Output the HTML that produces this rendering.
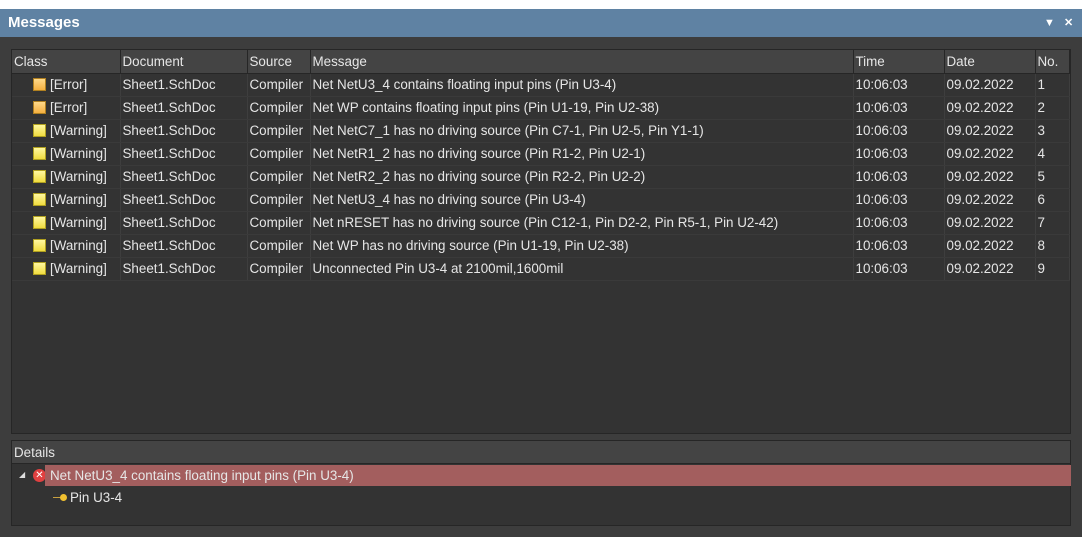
<!DOCTYPE html><html><head><style>
*{margin:0;padding:0;box-sizing:border-box}
body{width:1082px;height:537px;background:#3d3d3d;font-family:"Liberation Sans",sans-serif;font-size:13.4px;color:#e6e6e6;position:relative;overflow:hidden}
.top{position:absolute;left:0;top:0;width:1082px;height:9px;background:#fff}
.title{position:absolute;left:0;top:9px;width:1082px;height:28px;background:#5f82a3;color:#fff;font-weight:bold;font-size:15px;line-height:28px;padding-left:8px}
.title .b{position:absolute;top:0;font-size:11px}
.panel{position:absolute;left:11px;top:49px;width:1060px;height:385px;background:#333;border:1px solid #262626}
table{border-collapse:collapse;width:100%;table-layout:fixed}
td,th{height:23px;white-space:nowrap;overflow:hidden;font-weight:normal;text-align:left;padding-left:2px;border-right:1px solid #3e3e3e;border-bottom:1px solid #3a3a3a}
th{background:#444;border-right:1px solid #262626;border-bottom:1px solid #262626;height:23px}
.ic{display:inline-block;width:13px;height:13px;vertical-align:-2px;margin-right:4px;border:1px solid #b08020;background:linear-gradient(#ffd98a,#f5b040)}
.w{border-color:#b0a020;background:linear-gradient(#fff7a0,#f0dc40)}
.det{position:absolute;left:11px;top:440px;width:1060px;height:86px;background:#333;border:1px solid #262626}
.dh{height:23px;background:#444;line-height:23px;padding-left:2px;border-bottom:1px solid #262626}
.sel{position:absolute;left:33px;top:24px;width:1026px;height:21px;background:#a35e5e;line-height:21px;padding-left:5px}
</style></head><body>
<div class="top"></div>
<div class="title">Messages<span class="b" style="left:1044px">▼</span><span class="b" style="left:1064px">✕</span></div>
<div class="panel"><table>
<colgroup><col style="width:108px"><col style="width:127px"><col style="width:63px"><col style="width:543px"><col style="width:91px"><col style="width:91px"><col></colgroup>
<tr><th>Class</th><th>Document</th><th>Source</th><th>Message</th><th>Time</th><th>Date</th><th>No.</th></tr>
<tr><td style="padding-left:21px"><span class="ic"></span>[Error]</td><td>Sheet1.SchDoc</td><td>Compiler</td><td>Net NetU3_4 contains floating input pins (Pin U3-4)</td><td>10:06:03</td><td>09.02.2022</td><td>1</td></tr>
<tr><td style="padding-left:21px"><span class="ic"></span>[Error]</td><td>Sheet1.SchDoc</td><td>Compiler</td><td>Net WP contains floating input pins (Pin U1-19, Pin U2-38)</td><td>10:06:03</td><td>09.02.2022</td><td>2</td></tr>
<tr><td style="padding-left:21px"><span class="ic w"></span>[Warning]</td><td>Sheet1.SchDoc</td><td>Compiler</td><td>Net NetC7_1 has no driving source (Pin C7-1, Pin U2-5, Pin Y1-1)</td><td>10:06:03</td><td>09.02.2022</td><td>3</td></tr>
<tr><td style="padding-left:21px"><span class="ic w"></span>[Warning]</td><td>Sheet1.SchDoc</td><td>Compiler</td><td>Net NetR1_2 has no driving source (Pin R1-2, Pin U2-1)</td><td>10:06:03</td><td>09.02.2022</td><td>4</td></tr>
<tr><td style="padding-left:21px"><span class="ic w"></span>[Warning]</td><td>Sheet1.SchDoc</td><td>Compiler</td><td>Net NetR2_2 has no driving source (Pin R2-2, Pin U2-2)</td><td>10:06:03</td><td>09.02.2022</td><td>5</td></tr>
<tr><td style="padding-left:21px"><span class="ic w"></span>[Warning]</td><td>Sheet1.SchDoc</td><td>Compiler</td><td>Net NetU3_4 has no driving source (Pin U3-4)</td><td>10:06:03</td><td>09.02.2022</td><td>6</td></tr>
<tr><td style="padding-left:21px"><span class="ic w"></span>[Warning]</td><td>Sheet1.SchDoc</td><td>Compiler</td><td>Net nRESET has no driving source (Pin C12-1, Pin D2-2, Pin R5-1, Pin U2-42)</td><td>10:06:03</td><td>09.02.2022</td><td>7</td></tr>
<tr><td style="padding-left:21px"><span class="ic w"></span>[Warning]</td><td>Sheet1.SchDoc</td><td>Compiler</td><td>Net WP has no driving source (Pin U1-19, Pin U2-38)</td><td>10:06:03</td><td>09.02.2022</td><td>8</td></tr>
<tr><td style="padding-left:21px"><span class="ic w"></span>[Warning]</td><td>Sheet1.SchDoc</td><td>Compiler</td><td>Unconnected Pin U3-4 at 2100mil,1600mil</td><td>10:06:03</td><td>09.02.2022</td><td>9</td></tr>
</table></div>
<div class="det"><div class="dh">Details</div>
<span style="position:absolute;left:7px;top:29px;font-size:8px;color:#ddd">◢</span>
<span style="position:absolute;left:21px;top:28px;width:13px;height:13px;border-radius:50%;background:#e04040;color:#fff;font-size:10px;line-height:13px;text-align:center">✕</span>
<div class="sel">Net NetU3_4 contains floating input pins (Pin U3-4)</div>
<span style="position:absolute;left:41px;top:56px;width:10px;height:1px;background:#c8a040"></span>
<span style="position:absolute;left:48px;top:53px;width:7px;height:7px;border-radius:50%;background:#f0c030"></span>
<span style="position:absolute;left:58px;top:48px;line-height:18px">Pin U3-4</span>
</div>
</body></html>
